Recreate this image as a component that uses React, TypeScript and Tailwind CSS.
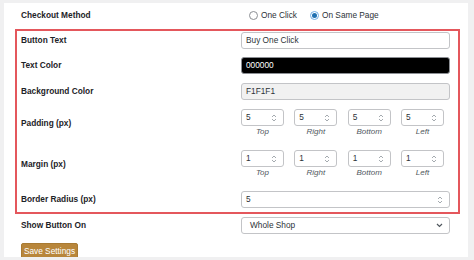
import React from 'react'

const font = { fontFamily: '"Liberation Sans", Arial, sans-serif' }

function Spinner() {
  return (
    <svg width="6" height="8" viewBox="0 0 6 8" className="text-[#9aa0a6]">
      <path d="M1 3 L3 1 L5 3" fill="none" stroke="currentColor" strokeWidth="0.9" />
      <path d="M1 5 L3 7 L5 5" fill="none" stroke="currentColor" strokeWidth="0.9" />
    </svg>
  )
}

function NumBox({ value, label }: { value: string; label: string }) {
  return (
    <div className="flex flex-col items-center w-[43px]">
      <div className="w-[43px] h-[17px] flex items-center justify-between pl-[4px] pr-[6px] border border-[#c3c4c7] rounded-[3px] bg-white text-[#2c3338]">
        <span>{value}</span>
        <Spinner />
      </div>
      <div className="h-[12px] flex items-center italic text-[#50575e] text-[8px]">{label}</div>
    </div>
  )
}

function Row({ label, children, className = '' }: { label: string; children: React.ReactNode; className?: string }) {
  return (
    <div className={`flex items-center ${className}`}>
      <div className="w-[220px] font-bold text-[#1d2327]">{label}</div>
      <div className="w-[209px]">{children}</div>
    </div>
  )
}

function TextBox({ value, className = '' }: { value: string; className?: string }) {
  return (
    <div className={`w-full h-[17px] flex items-center px-[4px] border rounded-[3px] ${className}`}>{value}</div>
  )
}

function Sides({ vals }: { vals: string[] }) {
  const names = ['Top', 'Right', 'Bottom', 'Left']
  return (
    <div className="flex justify-between w-[203px]">
      {vals.map((v, i) => (
        <NumBox key={i} value={v} label={names[i]} />
      ))}
    </div>
  )
}

export default function App() {
  return (
    <div className="w-[474px] h-[260px] bg-[#f0f0f1] pt-[3px] pl-[4px] overflow-hidden text-[8.3px] leading-none" style={font}>
      <div className="w-[464px] h-[254px] bg-white overflow-hidden pl-[11px]">
        <Row label="Checkout Method" className="h-[24px] pl-[6px] pt-[1px]">
          <div className="flex items-center gap-[3px] pl-[8px] text-[#2c3338]">
            <span className="w-[9px] h-[9px] rounded-full border border-[#8c8f94] bg-white" />
            <span className="mr-[10px]">One Click</span>
            <span className="w-[9px] h-[9px] rounded-full border border-[#72aee6] bg-white flex items-center justify-center">
              <span className="w-[5px] h-[5px] rounded-full bg-[#2271b1]" />
            </span>
            <span>On Same Page</span>
          </div>
        </Row>

        <div className="mt-[2px] w-[445px] border-2 border-[#e4575c] pl-[4px] pt-[1px] pb-[4px]">
          <Row label="Button Text">
            <TextBox value="Buy One Click" className="border-[#c3c4c7] bg-white text-[#2c3338] h-[16px]" />
          </Row>
          <Row label="Text Color" className="mt-[8px]">
            <TextBox value="000000" className="border-[#8c8f94] bg-black text-white" />
          </Row>
          <Row label="Background Color" className="mt-[9px]">
            <TextBox value="F1F1F1" className="border-[#c3c4c7] bg-[#f1f1f1] text-[#2c3338]" />
          </Row>
          <Row label="Padding (px)" className="mt-[9px]">
            <Sides vals={['5', '5', '5', '5']} />
          </Row>
          <Row label="Margin (px)" className="mt-[12px]">
            <Sides vals={['1', '1', '1', '1']} />
          </Row>
          <Row label="Border Radius (px)" className="mt-[12px]">
            <div className="w-full h-[17px] flex items-center justify-between pl-[4px] pr-[6px] border border-[#c3c4c7] rounded-[3px] bg-white text-[#2c3338]">
              <span>5</span>
              <Spinner />
            </div>
          </Row>
        </div>

        <Row label="Show Button On" className="mt-[3px] pl-[6px]">
          <div className="w-full h-[17px] flex items-center justify-between pl-[8px] pr-[6px] border border-[#c3c4c7] rounded-[3px] bg-white text-[#2c3338]">
            <span>Whole Shop</span>
            <svg width="7" height="5" viewBox="0 0 7 5">
              <path d="M1 1 L3.5 3.5 L6 1" fill="none" stroke="#50575e" strokeWidth="1.2" />
            </svg>
          </div>
        </Row>

        <div className="mt-[9px] pl-[6px]">
          <button className="h-[17px] w-[57px] bg-[#b8863b] border border-[#a87a33] rounded-[2px] text-white text-[8.3px]" style={font}>
            Save Settings
          </button>
        </div>
      </div>
    </div>
  )
}
